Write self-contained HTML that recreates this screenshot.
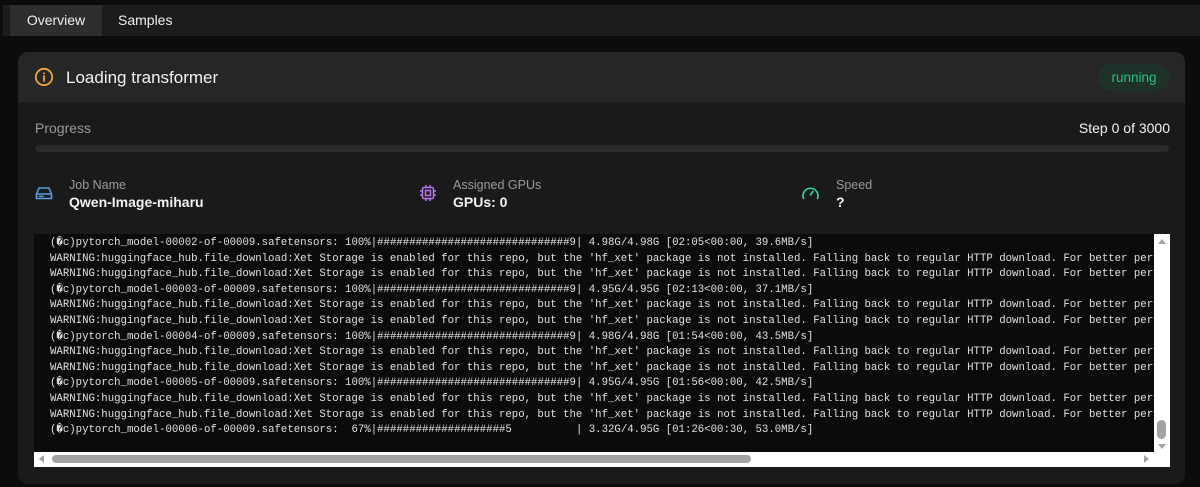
<!DOCTYPE html>
<html><head><meta charset="utf-8"><style>
*{box-sizing:border-box;margin:0;padding:0}
body{width:1200px;height:487px;background:#0c0c0c;font-family:"Liberation Sans",sans-serif;color:#eee;position:relative;overflow:hidden}
.tabs{position:absolute;left:3px;top:5px;width:1197px;height:31px;background:#1c1c1c}
.tab{position:absolute;top:0;height:31px;line-height:30px;font-size:14px;color:#eee}
.card{position:absolute;left:18px;top:52px;width:1167px;height:432px;background:#1a1a1a;border-radius:10px;overflow:hidden}
.hdr{position:absolute;left:0;top:0;width:100%;height:50px;background:#262626}
.lbl{position:absolute;font-size:12.5px;color:#9a9a9a}
.val{position:absolute;font-size:14px;font-weight:bold;color:#f2f2f2}
.log{position:absolute;left:16px;top:182px;width:1136px;height:233px;background:#0b0b0b;overflow:hidden}
.log pre{position:absolute;left:16px;top:2px;font-family:"Liberation Mono",monospace;font-size:10.7px;line-height:15.6px;color:#e0e0e0}
.r{font-family:"DejaVu Sans Mono",monospace;line-height:0}
</style></head><body>
<div class="tabs">
 <div class="tab" style="left:7px;width:92px;background:#2e2e2e;text-align:center">Overview</div>
 <div class="tab" style="left:115px">Samples</div>
</div>
<div class="card">
 <div class="hdr">
  <svg style="position:absolute;left:16px;top:15px" width="20" height="20" viewBox="0 0 20 20" fill="none" stroke="#e6a93a" stroke-width="1.8"><circle cx="10" cy="10" r="8.2"/><path d="M10 9v5M10 6.2v.3" stroke-linecap="round"/></svg>
  <div style="position:absolute;left:48px;top:16px;font-size:17px;color:#f2f2f2">Loading transformer</div>
  <div style="position:absolute;left:1080px;top:12px;width:72px;height:27px;border-radius:14px;background:#1e3229;color:#2bbf7d;font-size:13.5px;text-align:center;line-height:27px">running</div>
 </div>
 <div class="lbl" style="left:17px;top:68px;font-size:14px">Progress</div>
 <div style="position:absolute;right:15px;top:68px;font-size:14px;color:#f2f2f2">Step 0 of 3000</div>
 <div style="position:absolute;left:17px;top:93px;width:1134px;height:7px;border-radius:4px;background:#2a2a2a"></div>

 <svg style="position:absolute;left:17px;top:133px" width="18" height="16" viewBox="0 0 18 16" fill="none" stroke="#5b9be0" stroke-width="1.6"><path d="M1.5 9 L4 3 H14 L16.5 9 V13.5 H1.5 Z M1.5 9 H16.5"/><path d="M4.5 11.3h1M7 11.3h1" stroke-linecap="round"/></svg>
 <div class="lbl" style="left:51px;top:126px">Job Name</div>
 <div class="val" style="left:51px;top:142px">Qwen-Image-miharu</div>

 <svg style="position:absolute;left:401px;top:132px" width="18" height="18" viewBox="0 0 18 18" fill="none" stroke="#b478ec" stroke-width="1.5"><rect x="3.5" y="3.5" width="11" height="11" rx="1.5"/><rect x="6.5" y="6.5" width="5" height="5"/><path d="M7 1v2.5M11 1v2.5M7 14.5V17M11 14.5V17M1 7h2.5M1 11h2.5M14.5 7H17M14.5 11H17"/></svg>
 <div class="lbl" style="left:435px;top:126px">Assigned GPUs</div>
 <div class="val" style="left:435px;top:142px">GPUs: 0</div>

 <svg style="position:absolute;left:783px;top:133px" width="19" height="16" viewBox="0 0 19 16" fill="none" stroke="#2fd08f" stroke-width="1.7" stroke-linecap="round"><path d="M2.5 13.5 A7.5 7.5 0 1 1 16.5 13.5"/><path d="M9.5 10 L12 6.5"/></svg>
 <div class="lbl" style="left:818px;top:126px">Speed</div>
 <div class="val" style="left:818px;top:142px">?</div>

 <div class="log">
<pre>(<span class="r">�</span>c)pytorch_model-00002-of-00009.safetensors: 100%|##############################9| 4.98G/4.98G [02:05&lt;00:00, 39.6MB/s]
WARNING:huggingface_hub.file_download:Xet Storage is enabled for this repo, but the 'hf_xet' package is not installed. Falling back to regular HTTP download. For better performance
WARNING:huggingface_hub.file_download:Xet Storage is enabled for this repo, but the 'hf_xet' package is not installed. Falling back to regular HTTP download. For better performance
(<span class="r">�</span>c)pytorch_model-00003-of-00009.safetensors: 100%|##############################9| 4.95G/4.95G [02:13&lt;00:00, 37.1MB/s]
WARNING:huggingface_hub.file_download:Xet Storage is enabled for this repo, but the 'hf_xet' package is not installed. Falling back to regular HTTP download. For better performance
WARNING:huggingface_hub.file_download:Xet Storage is enabled for this repo, but the 'hf_xet' package is not installed. Falling back to regular HTTP download. For better performance
(<span class="r">�</span>c)pytorch_model-00004-of-00009.safetensors: 100%|##############################9| 4.98G/4.98G [01:54&lt;00:00, 43.5MB/s]
WARNING:huggingface_hub.file_download:Xet Storage is enabled for this repo, but the 'hf_xet' package is not installed. Falling back to regular HTTP download. For better performance
WARNING:huggingface_hub.file_download:Xet Storage is enabled for this repo, but the 'hf_xet' package is not installed. Falling back to regular HTTP download. For better performance
(<span class="r">�</span>c)pytorch_model-00005-of-00009.safetensors: 100%|##############################9| 4.95G/4.95G [01:56&lt;00:00, 42.5MB/s]
WARNING:huggingface_hub.file_download:Xet Storage is enabled for this repo, but the 'hf_xet' package is not installed. Falling back to regular HTTP download. For better performance
WARNING:huggingface_hub.file_download:Xet Storage is enabled for this repo, but the 'hf_xet' package is not installed. Falling back to regular HTTP download. For better performance
(<span class="r">�</span>c)pytorch_model-00006-of-00009.safetensors:  67%|####################5          | 3.32G/4.95G [01:26&lt;00:30, 53.0MB/s]</pre>
  <div style="position:absolute;left:1120px;top:0;width:16px;height:233px;background:#fff"></div>
  <div style="position:absolute;left:1124px;top:5px;width:0;height:0;border-left:4px solid transparent;border-right:4px solid transparent;border-bottom:5px solid #a3a3a3"></div>
  <div style="position:absolute;left:1123px;top:186px;width:9px;height:19px;border-radius:5px;background:#a3a3a3"></div>
  <div style="position:absolute;left:1124px;top:210px;width:0;height:0;border-left:4px solid transparent;border-right:4px solid transparent;border-top:5px solid #a3a3a3"></div>
  <div style="position:absolute;left:0;top:218px;width:1136px;height:15px;background:#fff"></div>
  <div style="position:absolute;left:5px;top:221px;width:0;height:0;border-top:4px solid transparent;border-bottom:4px solid transparent;border-right:5px solid #a3a3a3"></div>
  <div style="position:absolute;left:18px;top:221px;width:699px;height:8px;border-radius:4px;background:#a3a3a3"></div>
  <div style="position:absolute;left:1110px;top:221px;width:0;height:0;border-top:4px solid transparent;border-bottom:4px solid transparent;border-left:5px solid #a3a3a3"></div>
 </div>
</div>
</body></html>
